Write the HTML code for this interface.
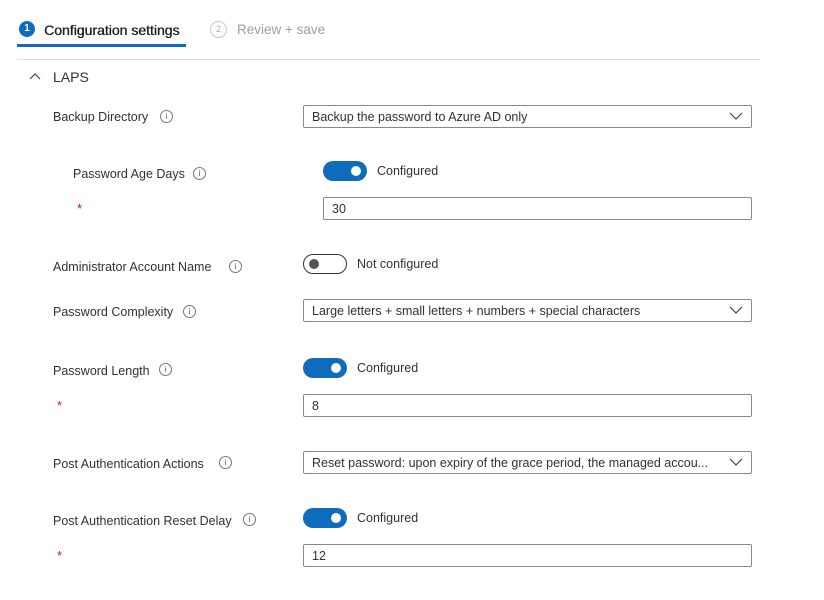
<!DOCTYPE html>
<html><head><style>
body{margin:0;width:824px;height:600px;background:#fff;font-family:"Liberation Sans",sans-serif;color:#323130;position:relative;overflow:hidden}
.a{position:absolute;white-space:nowrap}
.lbl{font-size:12.5px;line-height:16px}
.i{position:absolute;width:11px;height:11px;border:1px solid #777;border-radius:50%;font-size:8px;line-height:11px;text-align:center;color:#555}
.box{position:absolute;left:303px;width:439px;height:21px;border:1px solid #8a8886;border-radius:2px;font-size:12.5px;line-height:22px;padding-left:8px;box-sizing:content-box}
.tg{position:absolute;width:44px;height:20px;border-radius:10px;background:#0f6cbd}
.tg::after{content:"";position:absolute;right:6px;top:5px;width:10px;height:10px;border-radius:50%;background:#fff}
.off{background:#fff;border:1px solid #333;width:42px;height:18px}
.off::after{left:5px;right:auto;top:4px;background:#555}
.st{color:#a4262c;font-size:13px}
.chev{position:absolute;right:8px;top:5px}
</style></head><body>
<div class="a" style="left:19px;top:21px;width:16px;height:16px;border-radius:50%;background:#0f6cbd;color:#fff;font-size:10px;line-height:16px;text-align:center;font-weight:bold">1</div>
<div class="a" style="left:44px;top:22px;font-size:14px;color:#201f1e;text-shadow:0.4px 0 0 #201f1e">Configuration settings</div>
<div class="a" style="left:17px;top:44px;width:169px;height:3px;background:#0f6cbd"></div>
<div class="a" style="left:210px;top:21px;width:15px;height:15px;border-radius:50%;border:1px solid #c8c8c8;color:#aaa;font-size:9px;line-height:15px;text-align:center">2</div>
<div class="a" style="left:237px;top:22px;font-size:13.5px;color:#a19f9d">Review + save</div>
<div class="a" style="left:17px;top:59px;width:743px;height:1px;background:#e1dfdd"></div>
<svg class="a" style="left:29px;top:72px" width="12" height="8"><path d="M1 7L6 2L11 7" fill="none" stroke="#444" stroke-width="1.2"/></svg>
<div class="a" style="left:53px;top:69px;font-size:14px">LAPS</div>

<div class="a lbl" style="left:53px;top:109px">Backup Directory</div><div class="i" style="left:160px;top:110px">i</div>
<div class="box" style="top:105px">Backup the password to Azure AD only<svg class="chev" width="14" height="10"><path d="M1 2L7 8L13 2" fill="none" stroke="#444" stroke-width="1.2"/></svg></div>

<div class="a lbl" style="left:73px;top:166px">Password Age Days</div><div class="i" style="left:193px;top:167px">i</div>
<div class="tg" style="left:323px;top:161px"></div><div class="a lbl" style="left:377px;top:163px">Configured</div>
<div class="a st" style="left:77px;top:201px">*</div>
<div class="box" style="left:323px;width:419px;top:197px">30</div>

<div class="a lbl" style="left:53px;top:259px">Administrator Account Name</div><div class="i" style="left:229px;top:260px">i</div>
<div class="tg off" style="left:303px;top:254px"></div><div class="a lbl" style="left:357px;top:256px">Not configured</div>

<div class="a lbl" style="left:53px;top:304px">Password Complexity</div><div class="i" style="left:183px;top:305px">i</div>
<div class="box" style="top:299px">Large letters + small letters + numbers + special characters<svg class="chev" width="14" height="10"><path d="M1 2L7 8L13 2" fill="none" stroke="#444" stroke-width="1.2"/></svg></div>

<div class="a lbl" style="left:53px;top:363px">Password Length</div><div class="i" style="left:159px;top:363px">i</div>
<div class="tg" style="left:303px;top:358px"></div><div class="a lbl" style="left:357px;top:360px">Configured</div>
<div class="a st" style="left:57px;top:398px">*</div>
<div class="box" style="top:394px">8</div>

<div class="a lbl" style="left:53px;top:456px">Post Authentication Actions</div><div class="i" style="left:219px;top:456px">i</div>
<div class="box" style="top:451px">Reset password: upon expiry of the grace period, the managed accou...<svg class="chev" width="14" height="10"><path d="M1 2L7 8L13 2" fill="none" stroke="#444" stroke-width="1.2"/></svg></div>

<div class="a lbl" style="left:53px;top:513px">Post Authentication Reset Delay</div><div class="i" style="left:243px;top:513px">i</div>
<div class="tg" style="left:303px;top:508px"></div><div class="a lbl" style="left:357px;top:510px">Configured</div>
<div class="a st" style="left:57px;top:548px">*</div>
<div class="box" style="top:544px">12</div>
</body></html>
